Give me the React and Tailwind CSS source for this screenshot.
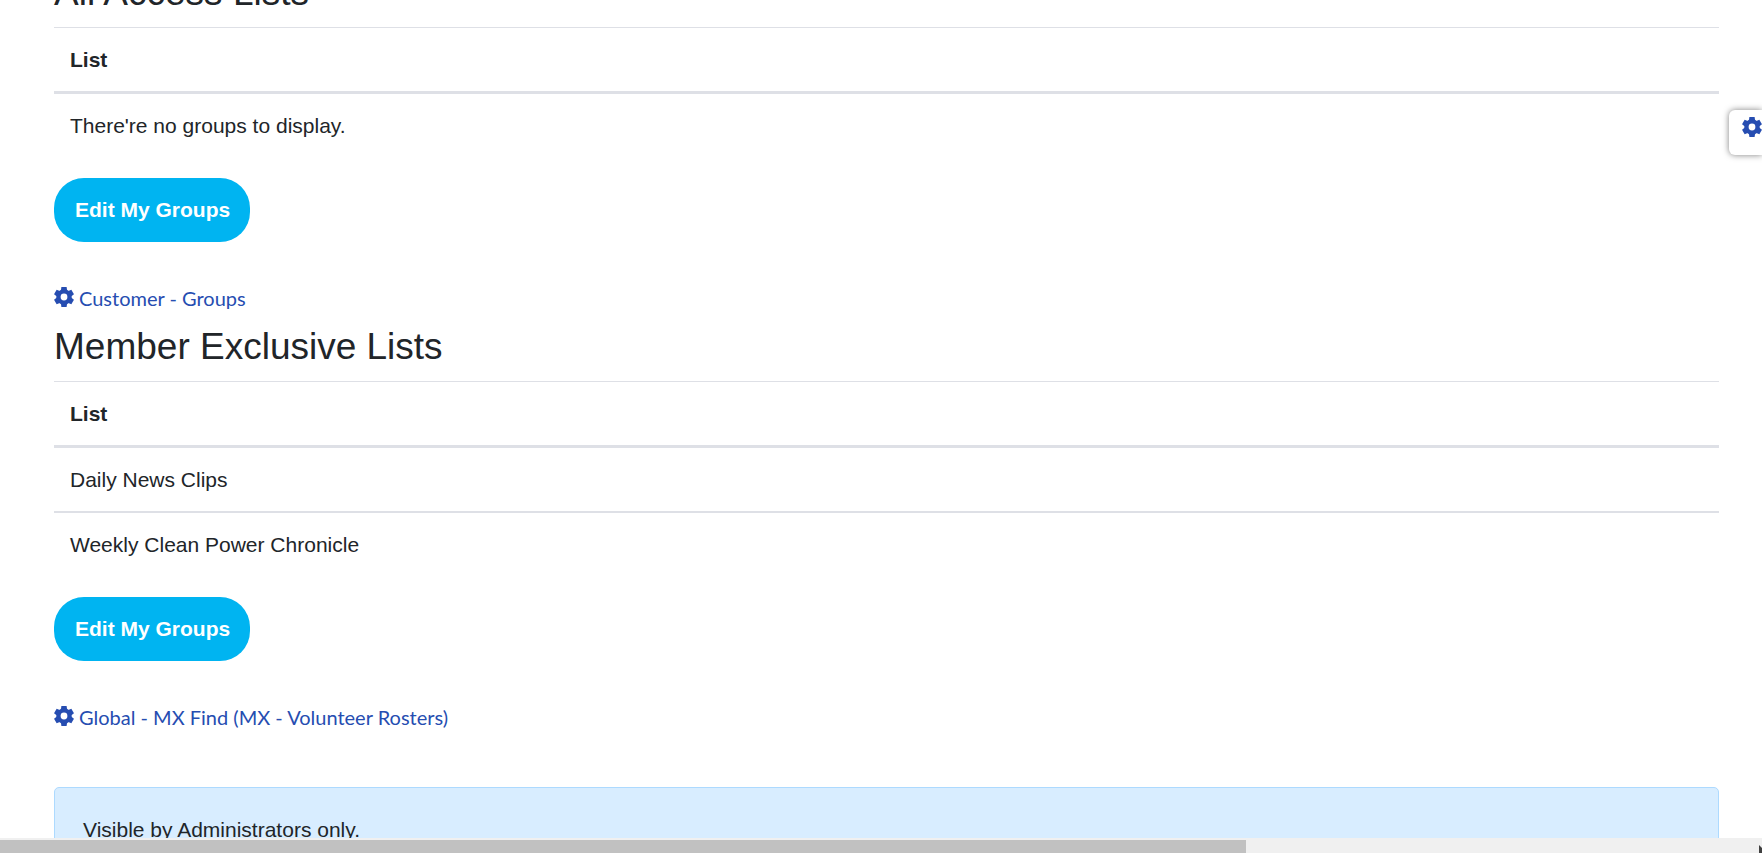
const sections = [
  {
    title: "All Access Lists",
    groups: [],
    admin: "Customer - Groups",
  },
  {
    title: "Member Exclusive Lists",
    groups: ["Daily News Clips", "Weekly Clean Power Chronicle"],
    admin: "Global - MX Find (MX - Volunteer Rosters)",
  },
];

function CogIcon({ className = "" }) {
  const tooth = "M7.4 0h5.2l.6 4v12l-.6 4H7.4l-.6-4V4z";

  return (
    <svg viewBox="0 0 20 20" className={`size-5 shrink-0 overflow-visible ${className}`} aria-hidden="true">
      <g fill="currentColor">
        <path d={tooth} />
        <path d={tooth} transform="rotate(60 10 10)" />
        <path d={tooth} transform="rotate(120 10 10)" />
        <circle cx="10" cy="10" r="7.7" />
      </g>
      <circle cx="10" cy="10" r="3.4" fill="#fff" />
    </svg>
  );
}

function AdminLink({ label }) {
  return (
    <a
      href="#"
      className="flex w-fit items-center gap-[5px] font-['Lato','Open_Sans',sans-serif] text-[20px] leading-8 text-[#264db1] hover:underline"
    >
      <CogIcon className="mb-[2px]" />
      <span>{label}</span>
    </a>
  );
}

function GroupList({ title, groups }) {
  return (
    <section>
      <h2 className="mb-[11px] text-[37px] leading-[46px]">{title}</h2>

      <table className="w-full border-separate border-spacing-0 text-left">
        <thead>
          <tr>
            <th className="border-t border-b-3 border-[#dee0e6] p-4 font-bold">List</th>
          </tr>
        </thead>
        <tbody>
          {groups.length === 0 ? (
            <tr>
              <td className="p-4">There're no groups to display.</td>
            </tr>
          ) : (
            groups.map((group) => (
              <tr key={group} className="group">
                <td className="border-b-2 border-[#dee0e6] p-4 group-last:border-b-0">{group}</td>
              </tr>
            ))
          )}
        </tbody>
      </table>

      <button className="mt-[21px] h-16 rounded-[30px] bg-[#00b4f1] pr-5 pb-[2px] pl-[21px] font-bold text-white">
        Edit My Groups
      </button>
    </section>
  );
}

export default function App() {
  return (
    <div className="flex h-screen flex-col overflow-hidden bg-white font-['Liberation_Sans',Arial,sans-serif] text-[21px] leading-[31px] text-[#212529]">
      <main className="-mt-[30px] min-h-0 flex-1 overflow-hidden pr-[43px] pl-[54px]">
        {sections.map((section) => (
          <div key={section.title} className="mb-[10px]">
            <GroupList title={section.title} groups={section.groups} />
            <div className="mt-10">
              <AdminLink label={section.admin} />
            </div>
          </div>
        ))}

        <div className="mt-[54px] rounded-[5px] border border-[#addaff] bg-[#d8edff] px-7 pt-[26px] pb-7">
          <p>Visible by Administrators only.</p>
        </div>
      </main>

      {/* Horizontal scrollbar */}
      <div className="flex h-[15px] shrink-0 items-end justify-between bg-[#f0f0f0]">
        <div className="h-[13px] w-[70.7%] bg-[#c1c1c1]" />
        <svg viewBox="0 0 3 8" className="h-2 w-[3px]" aria-hidden="true">
          <path d="M0 0l3 3v5H0z" fill="#404040" />
        </svg>
      </div>

      {/* Page settings tab */}
      <button
        aria-label="Settings"
        className="fixed top-[110px] right-0 flex h-[45px] w-[33px] items-start rounded-l-[6px] bg-white pt-[7px] pl-[13px] text-[#264db1] shadow-[0_0_6px_rgba(0,0,0,0.5)]"
      >
        <CogIcon />
      </button>
    </div>
  );
}
